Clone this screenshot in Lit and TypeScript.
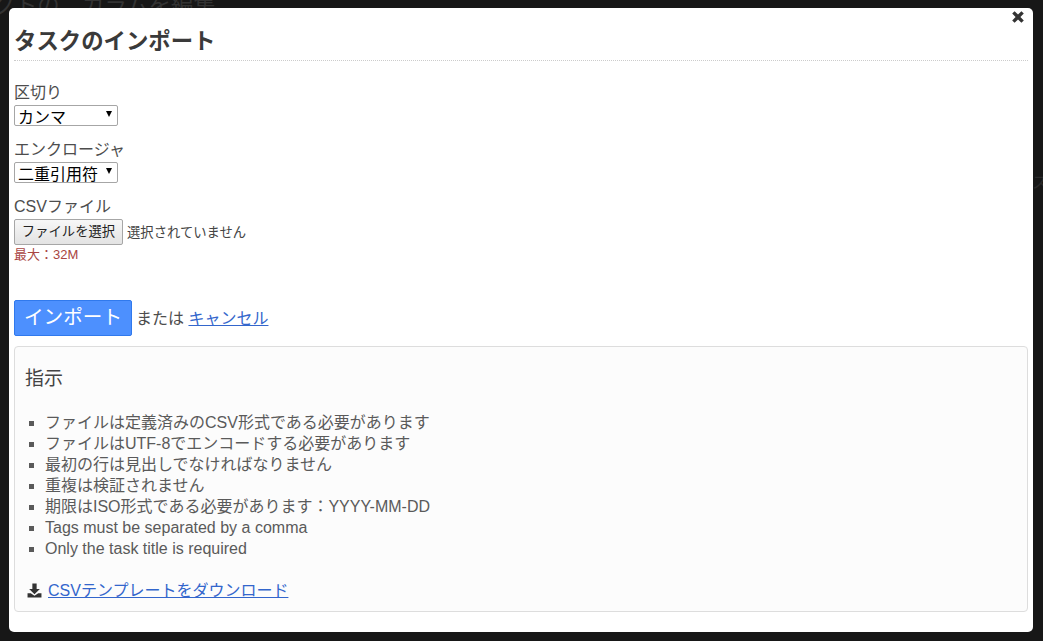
import { LitElement, html, css } from "lit";
import { customElement } from "lit/decorators.js";

@customElement("app-root")
export class AppRoot extends LitElement {
  static styles = css`
    :host {
      display: block;
      width: 1043px;
      height: 641px;
      overflow: hidden;
      position: relative;
      background: #171717;
      font-family: "Liberation Sans", "Noto Sans CJK JP", sans-serif;
      color: #333;
      font-size: 16px;
    }
    .behind {
      position: absolute;
      left: -97px;
      top: -8px;
      font-size: 22.4px;
      line-height: 28px;
      color: #333;
      white-space: nowrap;
      font-weight: 400;
    }
    .behind-right {
      position: absolute;
      left: 1032px;
      top: 173px;
      font-size: 16px;
      line-height: 20px;
      color: #2a2a2a;
    }
    .wrap {
      padding: 8px 10px 9px 9px;
      height: 624px;
      position: relative;
    }
    .modal {
      position: relative;
      background: #fff;
      border-radius: 5px;
      height: 624px;
      padding: 0 5px;
      box-sizing: border-box;
    }
    .close {
      position: absolute;
      right: 8px;
      top: 2px;
      width: 14px;
      height: 14px;
      display: block;
      fill: #333;
    }
    h2 {
      margin: 0;
      padding: 19px 0 0 0;
      height: 53px;
      box-sizing: border-box;
      border-bottom: 1px dotted #ccc;
      font-size: 22.4px;
      line-height: 30px;
      font-weight: 700;
      color: #3a3a3a;
    }
    label {
      display: block;
      font-size: 16px;
      line-height: 20px;
      color: #4d4d4d;
      padding-top: 1px;
      margin-bottom: 2px;
    }
    .select {
      box-sizing: border-box;
      width: 104px;
      height: 21px;
      border: 1px solid #a6a6a6;
      border-radius: 2px;
      position: relative;
      overflow: hidden;
      color: #000;
      font-size: 16px;
      line-height: 24px;
      padding-left: 3px;
      background: #fff;
    }
    .select::after {
      content: "";
      position: absolute;
      right: 5px;
      top: 5px;
      border-left: 3.5px solid transparent;
      border-right: 3.5px solid transparent;
      border-top: 6px solid #000;
    }
    .group { display: flex; flex-direction: column; }
    .g1 { padding-top: 21px; }
    .g2 { padding-top: 13px; }
    .file {
      display: flex;
      align-items: center;
      gap: 4px;
      height: 26px;
      font-size: 13.33px;
      color: #444;
    }
    .file button {
      width: 109px;
      height: 26px;
      box-sizing: border-box;
      border: 1px solid #a6a6a6;
      border-radius: 2px;
      background: linear-gradient(#f7f7f7, #e3e3e3);
      color: #222;
      font-family: inherit;
      font-size: 13.33px;
      padding: 0 0 3px;
    }
    .none { margin-bottom: 2px; }
    .max { color: #a94442; font-size: 13px; line-height: 18px; margin-top: 1px; }
    .actions {
      display: flex;
      align-items: center;
      margin-top: 36px;
      font-size: 16px;
      color: #4d4d4d;
      height: 36px;
    }
    .submit {
      box-sizing: border-box;
      width: 118px;
      height: 36px;
      border: 1px solid #3079ed;
      border-radius: 2px;
      background: #4d90fe;
      color: #fff;
      font-family: inherit;
      font-size: 19.6px;
      padding: 0 0 5px;
      margin-right: 4px;
    }
    .alt { margin-bottom: 2px; }
    a { color: #3366cc; text-decoration: underline; }
    .panel {
      box-sizing: border-box;
      margin-top: 10px;
      width: 1014px;
      height: 266px;
      background: #fcfcfc;
      border: 1px solid #ddd;
      border-radius: 4px;
      padding: 0 10px;
      color: #555;
    }
    h3 {
      margin: 0;
      padding-top: 21px;
      font-size: 19px;
      line-height: 22px;
      font-weight: 400;
      color: #444;
    }
    ul {
      margin: 22px 0 0;
      padding: 0 0 0 20px;
      list-style: square;
      font-size: 16px;
      line-height: 21px;
      color: #5a5a5a;
    }
    .dl { margin-top: 21px; display: flex; align-items: center; gap: 6px; line-height: 21px; }
    .dl svg { width: 15px; height: 15px; fill: #333; display: block; margin-left: 2px; }
  `;

  render() {
    return html`
      <div class="behind">プロジェクトの　カラムを編集</div>
      <div class="behind-right">ス</div>
      <div class="wrap">
        <div class="modal">
          <svg class="close" viewBox="0 0 14 14" aria-hidden="true">
            <path d="M1.2 3.6 3.6 1.2 7 4.6 10.4 1.2 12.8 3.6 9.4 7 12.8 10.4 10.4 12.8 7 9.4 3.6 12.8 1.2 10.4 4.6 7Z" />
          </svg>
          <h2>タスクのインポート</h2>
          <div class="group g1">
            <label>区切り</label>
            <div class="select">カンマ</div>
          </div>
          <div class="group g2">
            <label>エンクロージャ</label>
            <div class="select">二重引用符</div>
          </div>
          <div class="group g2">
            <label>CSVファイル</label>
            <div class="file"><button>ファイルを選択</button><span class="none">選択されていません</span></div>
            <div class="max">最大：32M</div>
          </div>
          <div class="actions">
            <button class="submit">インポート</button>
            <span class="alt">または <a href="#">キャンセル</a></span>
          </div>
          <div class="panel">
            <h3>指示</h3>
            <ul>
              <li>ファイルは定義済みのCSV形式である必要があります</li>
              <li>ファイルはUTF-8でエンコードする必要があります</li>
              <li>最初の行は見出しでなければなりません</li>
              <li>重複は検証されません</li>
              <li>期限はISO形式である必要があります：YYYY-MM-DD</li>
              <li>Tags must be separated by a comma</li>
              <li>Only the task title is required</li>
            </ul>
            <div class="dl">
              <svg viewBox="0 0 14 14" aria-hidden="true">
                <path d="M5 0.5h4v5h3L7 10.5 2 5.5h3Z" />
                <path d="M0.5 9.5h3L7 12l3.5-2.5h3V13.5h-13Z" />
              </svg>
              <a href="#">CSVテンプレートをダウンロード</a>
            </div>
          </div>
        </div>
      </div>
    `;
  }
}
